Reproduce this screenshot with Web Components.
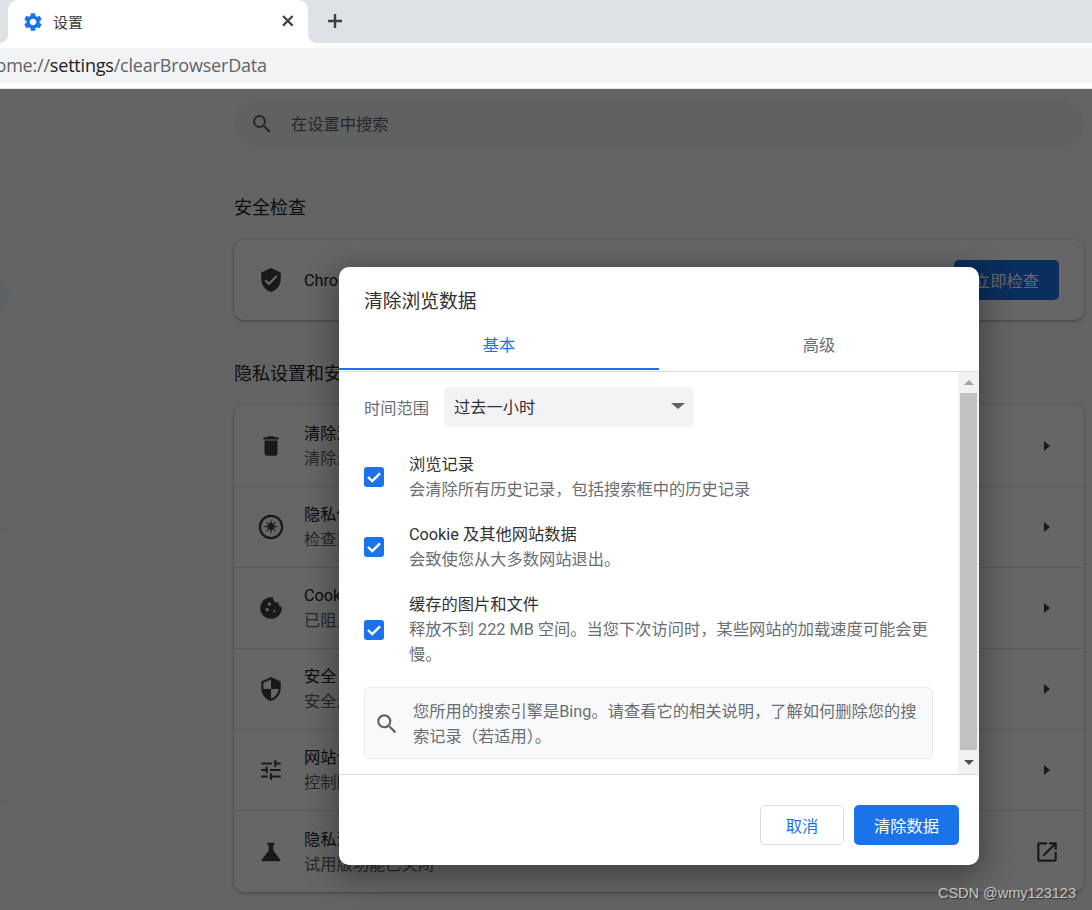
<!DOCTYPE html>
<html lang="zh">
<head>
<meta charset="utf-8">
<title>设置</title>
<style>
  html, body { margin: 0; height: 100%; overflow: hidden; background: #fff; }
  body { font-family: Roboto, "Noto Sans CJK SC", sans-serif; font-size: 16.25px; color: #202124; }
</style>
</head>
<body>
<browser-window>
  <settings-page></settings-page>
  <clear-dialog slot="overlay"></clear-dialog>
</browser-window>

<script>
const ICONS = {
  gear: "M19.14 12.94c.04-.3.06-.61.06-.94 0-.32-.02-.64-.07-.94l2.03-1.58a.49.49 0 0 0 .12-.61l-1.92-3.32a.488.488 0 0 0-.59-.22l-2.39.96c-.5-.38-1.03-.7-1.62-.94l-.36-2.54a.484.484 0 0 0-.48-.41h-3.84c-.24 0-.43.17-.47.41l-.36 2.54c-.59.24-1.13.57-1.62.94l-2.39-.96c-.22-.08-.47 0-.59.22L2.74 8.87c-.12.21-.08.47.12.61l2.03 1.58c-.05.3-.09.63-.09.94s.02.64.07.94l-2.03 1.58a.49.49 0 0 0-.12.61l1.92 3.32c.12.22.37.29.59.22l2.39-.96c.5.38 1.03.7 1.62.94l.36 2.54c.05.24.24.41.48.41h3.84c.24 0 .44-.17.47-.41l.36-2.54c.59-.24 1.13-.56 1.62-.94l2.39.96c.22.08.47 0 .59-.22l1.92-3.32c.12-.22.07-.47-.12-.61l-2.01-1.58zM12 15.6c-1.98 0-3.6-1.62-3.6-3.6s1.62-3.6 3.6-3.6 3.6 1.62 3.6 3.6-1.62 3.6-3.6 3.6z",
  search: "M15.5 14h-.79l-.28-.27A6.471 6.471 0 0 0 16 9.5 6.5 6.5 0 1 0 9.5 16c1.61 0 3.09-.59 4.23-1.57l.27.28v.79l5 4.99L20.49 19l-4.99-5zm-6 0C7.01 14 5 11.99 5 9.5S7.01 5 9.5 5 14 7.01 14 9.5 11.99 14 9.5 14z",
  verified: "M12 1L3 5v6c0 5.55 3.84 10.74 9 12 5.16-1.26 9-6.45 9-12V5l-9-4zm-2 16l-4-4 1.41-1.41L10 14.17l6.59-6.59L18 9l-8 8z",
  trash: "M6 19c0 1.1.9 2 2 2h8c1.1 0 2-.9 2-2V7H6v12zM19 4h-3.5l-1-1h-5l-1 1H5v2h14V4z",
  compass: "M12 1.5a10.5 10.5 0 1 0 0 21 10.5 10.5 0 0 0 0-21zm0 1.9a8.6 8.6 0 1 1 0 17.2 8.6 8.6 0 0 1 0-17.2zM12 5.2l.9 4.2 3.6-2.3-2.3 3.6 4.6.9-4.6 1 2.3 3.5-3.6-2.3-.9 4.6-.9-4.6-3.6 2.3 2.3-3.5-4.6-1 4.6-.9-2.3-3.6 3.6 2.3z",
  cookie: "M21.95 10.99c-1.79-.03-3.7-1.95-2.68-4.22-2.98 1-5.77-1.59-5.19-4.56C6.95.71 2 6.58 2 12c0 5.52 4.48 10 10 10 5.89 0 10.54-5.08 9.95-11.01zM8.5 15c-.83 0-1.5-.67-1.5-1.5S7.67 12 8.5 12s1.5.67 1.5 1.5S9.33 15 8.5 15zm2-5C9.67 10 9 9.33 9 8.5S9.67 7 10.5 7s1.5.67 1.5 1.5-.67 1.5-1.5 1.5zm4.5 6c-.55 0-1-.45-1-1s.45-1 1-1 1 .45 1 1-.45 1-1 1z",
  shield: "M12 1L3 5v6c0 5.55 3.84 10.74 9 12 5.16-1.26 9-6.45 9-12V5l-9-4zm0 10.99h7c-.53 4.12-3.28 7.79-7 8.94V12H5V6.3l7-3.11v8.8z",
  tune: "M3 17v2h6v-2H3zM3 5v2h10V5H3zm10 16v-2h8v-2h-8v-2h-2v6h2zM7 9v2H3v2h4v2h2V9H7zm14 4v-2H11v2h10zm-6-4h2V7h4V5h-4V3h-2v6z",
  flask: "M19.8 18.4L14 10.67V6.5l1.35-1.69c.26-.33.03-.81-.39-.81H9.04c-.42 0-.65.48-.39.81L10 6.5v4.17L4.2 18.4c-.49.66-.02 1.6.8 1.6h14c.82 0 1.29-.94.8-1.6z",
  external: "M19 19H5V5h7V3H5a2 2 0 0 0-2 2v14a2 2 0 0 0 2 2h14c1.1 0 2-.9 2-2v-7h-2v7zM14 3v2h3.59l-9.83 9.83 1.41 1.41L19 6.41V10h2V3h-7z"
};

customElements.define(
  "app-icon",
  class extends HTMLElement {
    connectedCallback() {
      const size = this.getAttribute("size") || 24;
      const d = ICONS[this.getAttribute("name")];
      this.attachShadow({ mode: "open" });
      this.shadowRoot.innerHTML = `
        <style>
          :host { display: inline-flex; flex: none; color: inherit; }
          svg { display: block; fill: currentColor; }
        </style>
        <svg width="${size}" height="${size}" viewBox="0 0 24 24"><path d="${d}"/></svg>
      `;
    }
  }
);

customElements.define(
  "browser-window",
  class extends HTMLElement {
    constructor() {
      super();
      this.attachShadow({ mode: "open" });
      this.shadowRoot.innerHTML = `
        <style>
          :host { display: flex; flex-direction: column; height: 910px; overflow: hidden; }
          .strip { display: flex; align-items: stretch; height: 43px; background: #dee1e6; padding-left: 8px; }
          .tab {
            position: relative; width: 300px; box-sizing: border-box; background: #fff;
            border-radius: 10px 10px 0 0; display: flex; align-items: center; padding: 0 10px 0 14px;
          }
          .tab::before, .tab::after {
            content: ""; position: absolute; bottom: 0; width: 8px; height: 8px;
            background: radial-gradient(circle at var(--c) 0, #dee1e6 7.5px, #fff 8px);
          }
          .tab::before { left: -8px; --c: 0; }
          .tab::after { right: -8px; --c: 100%; }
          .tab-title { flex: 1; margin-left: 9px; font-size: 15px; color: #3c4043; }
          .close { width: 20px; height: 20px; margin-top: -1px; }
          .plus { width: 20px; height: 20px; margin: 11px 0 0 17px; }
          .gap { height: 5px; background: #fff; }
          .omni {
            height: 35px; background: #f1f3f4; display: flex; align-items: center; overflow: hidden;
            font: 18px/35px "Open Sans", "Noto Sans", sans-serif; color: #5f6368; white-space: nowrap;
            letter-spacing: -.2px;
          }
          .omni span { margin-left: -4.5px; }
          .omni b { font-weight: 400; color: #202124; }
          .rule { background: #fff; border-bottom: 1px solid #e4e4e4; box-sizing: border-box; height: 6px; }
          .stage { position: relative; flex: 1; overflow: hidden; }
          .scrim { position: absolute; inset: 0; background: rgba(0, 0, 0, .6); }
          .mark {
            position: absolute; right: 16px; bottom: 9px; font: 14.5px "Liberation Sans", sans-serif;
            color: #c8c8c8; text-shadow: 1px 1px 1px #333;
          }
        </style>
        <div class="strip">
          <div class="tab">
            <app-icon name="gear" size="22" style="color:#1a73e8"></app-icon>
            <span class="tab-title">设置</span>
            <svg class="close" viewBox="0 0 20 20"><path d="M5 5l9.6 9.6M14.6 5L5 14.6" stroke="#3c4043" stroke-width="2.2" fill="none"/></svg>
          </div>
          <svg class="plus" viewBox="0 0 20 20"><path d="M10 3v14M3 10h14" stroke="#3c4043" stroke-width="2.4" fill="none"/></svg>
        </div>
        <div class="gap"></div>
        <div class="omni"><span>ome://<b>settings</b>/clearBrowserData</span></div>
        <div class="rule"></div>
        <div class="stage">
          <slot></slot>
          <div class="scrim"></div>
          <slot name="overlay"></slot>
          <div class="mark">CSDN @wmy123123</div>
        </div>
      `;
    }
  }
);

customElements.define(
  "settings-row",
  class extends HTMLElement {
    connectedCallback() {
      const icon = this.getAttribute("icon");
      const size = this.getAttribute("icon-size") || 26;
      const end = this.getAttribute("end");
      const trail = end === "external"
        ? `<app-icon name="external" size="26" class="ext"></app-icon>`
        : `<i class="chev"></i>`;
      this.attachShadow({ mode: "open" });
      this.shadowRoot.innerHTML = `
        <style>
          :host { display: flex; align-items: center; height: 81px; box-sizing: border-box; padding: 0 25px 0 24px; border-top: 1px solid #dadce0; }
          :host(:first-child) { border-top: 0; }
          :host(:last-child) { height: 82px; }
          .ic { width: 26px; margin-right: 20px; color: #3c4043; display: flex; justify-content: center; }
          .txt { flex: 1; min-width: 0; white-space: nowrap; line-height: 25px; }
          .t { color: #202124; }
          .s { color: #5f6368; }
          .chev { width: 0; height: 0; border-left: 6px solid #3c4043; border-top: 5.5px solid transparent; border-bottom: 5.5px solid transparent; margin-right: 9px; }
          .ext { color: #3c4043; margin-right: -1px; }
        </style>
        <div class="ic"><app-icon name="${icon}" size="${size}"></app-icon></div>
        <div class="txt">
          <div class="t">${this.getAttribute("title")}</div>
          <div class="s">${this.getAttribute("sub")}</div>
        </div>
        ${trail}
      `;
    }
  }
);

customElements.define(
  "settings-page",
  class extends HTMLElement {
    constructor() {
      super();
      this.attachShadow({ mode: "open" });
      this.shadowRoot.innerHTML = `
        <style>
          :host { display: grid; grid-template-columns: 234px 850px; height: 821px; background: #fafafb; }
          nav { padding-top: 185px; }
          .pill { width: 23px; height: 44px; margin-left: -14px; border-radius: 0 22px 22px 0; background: #e8f0fe; }
          .line { width: 12px; height: 1px; background: #e8eaed; }
          main { padding-top: 10px; }
          .search {
            height: 50px; border-radius: 25px; background: #f1f3f4; display: flex; align-items: center;
            padding-left: 15px; color: #5f6368;
          }
          .search app-icon { margin-left: 1px; }
          .search span { margin-left: 17px; margin-top: -2px; }
          h2 { margin: 0; height: 24px; font-size: 18px; font-weight: 400; line-height: 24px; color: #202124; }
          .h1 { margin-top: 47px; }
          .h2 { margin-top: 42px; }
          .card {
            background: #fff; border-radius: 10px; margin-top: 20px;
            box-shadow: 0 1px 2px rgba(60, 64, 67, .3), 0 1px 4px 1px rgba(60, 64, 67, .15);
          }
          .check { height: 80px; display: flex; align-items: center; padding: 0 25px 0 24px; color: #202124; white-space: nowrap; }
          .check .ic { width: 46px; color: #3c4043; display: flex; }
          .check .txt { flex: 1; min-width: 0; }
          .btn {
            flex: none; width: 105px; height: 40px; border-radius: 5px; background: #1a73e8; color: #fff;
            display: flex; align-items: center; justify-content: center;
          }
          .rows { margin-top: 19px; }
        </style>
        <nav>
          <div class="pill"></div>
          <div class="line" style="margin-top:211px"></div>
          <div class="line" style="margin-top:271px"></div>
        </nav>
        <main>
          <div class="search"><app-icon name="search" size="24"></app-icon><span>在设置中搜索</span></div>
          <h2 class="h1">安全检查</h2>
          <div class="card check">
            <div class="ic"><app-icon name="verified" size="26"></app-icon></div>
            <div class="txt">Chrome</div>
            <div class="btn">立即检查</div>
          </div>
          <h2 class="h2">隐私设置和安全性</h2>
          <div class="card rows">
            <settings-row icon="trash" title="清除浏" sub="清除浏"></settings-row>
            <settings-row icon="compass" icon-size="28" title="隐私保" sub="检查重"></settings-row>
            <settings-row icon="cookie" title="Cookie" sub="已阻止"></settings-row>
            <settings-row icon="shield" title="安全" sub="安全浏"></settings-row>
            <settings-row icon="tune" title="网站设" sub="控制网"></settings-row>
            <settings-row icon="flask" icon-size="28" end="external" title="隐私沙盒" sub="试用版功能已关闭"></settings-row>
          </div>
        </main>
      `;
    }
  }
);

customElements.define(
  "check-item",
  class extends HTMLElement {
    constructor() {
      super();
      this.attachShadow({ mode: "open" });
      this.shadowRoot.innerHTML = `
        <style>
          :host { display: flex; align-items: center; gap: 25px; line-height: 25px; }
          .box { flex: none; width: 20px; height: 20px; border-radius: 3px; background: #1a73e8; display: flex; }
          .t { color: #303134; }
          .s { color: #6a6e73; }
        </style>
        <div class="box">
          <svg width="20" height="20" viewBox="0 0 20 20"><path d="M4 10l4.2 4 7.8-7.7" stroke="#fff" stroke-width="2.4" fill="none"/></svg>
        </div>
        <div>
          <div class="t"><slot name="title"></slot></div>
          <div class="s"><slot name="sub"></slot></div>
        </div>
      `;
    }
  }
);

customElements.define(
  "clear-dialog",
  class extends HTMLElement {
    constructor() {
      super();
      this.attachShadow({ mode: "open" });
      this.shadowRoot.innerHTML = `
        <style>
          :host {
            position: absolute; left: 339px; top: 178px; width: 640px; height: 598px;
            display: flex; flex-direction: column; overflow: hidden; background: #fff; border-radius: 10px;
            box-shadow: 0 8px 30px 6px rgba(0, 0, 0, .32);
          }
          .title { height: 55px; flex: none; box-sizing: border-box; padding: 21px 25px 0; font-size: 18.75px; line-height: 28px; color: #303134; }
          .tabs { flex: none; display: flex; height: 50px; border-bottom: 1px solid #dadce0; box-sizing: border-box; }
          .tabs div { flex: 1; display: flex; align-items: center; justify-content: center; color: #6a6e73; height: 48px; padding-bottom: 2px; box-sizing: border-box; border-bottom: 2px solid transparent; }
          .tabs .on { color: #1a73e8; border-bottom-color: #1a73e8; }
          .mid { flex: 1; min-height: 0; display: flex; border-bottom: 1px solid #dadce0; }
          .body { flex: 1; min-width: 0; padding: 15px 25px 0; overflow: hidden; }
          .range { display: flex; align-items: center; gap: 15px; color: #6a6e73; }
          .range > span { padding-bottom: 1px; }
          .select {
            width: 250px; height: 40px; box-sizing: border-box; padding: 0 9px 3px 10px; border-radius: 5px;
            background: #f1f3f4; color: #303134; display: flex; align-items: center; justify-content: space-between;
          }
          .select i { width: 0; height: 0; border-top: 6.5px solid #5f6368; border-left: 7px solid transparent; border-right: 7px solid transparent; }
          .items { margin-top: 25px; display: flex; flex-direction: column; gap: 20px; }
          .info {
            margin-top: 20px; height: 72px; box-sizing: border-box; width: 569px; padding: 1px 15px 0 9px;
            border: 1px solid #e8eaed; border-radius: 5px; background: #f8f9fa; display: flex; align-items: center; gap: 13px;
            color: #6a6e73; line-height: 25px;
          }
          .info app-icon { color: #5f6368; }
          .bar { flex: none; width: 21px; background: #f1f1f1; display: flex; flex-direction: column; align-items: center; }
          .up, .down { flex: none; height: 21px; display: flex; align-items: center; justify-content: center; }
          .down { height: 24px; }
          .up i { border-bottom: 5px solid #a3a3a3; border-left: 5px solid transparent; border-right: 5px solid transparent; }
          .down i { border-top: 5px solid #505050; border-left: 5px solid transparent; border-right: 5px solid transparent; }
          .thumb { flex: 1; width: 17px; background: #c1c1c1; }
          .foot { flex: none; height: 90px; box-sizing: border-box; padding: 30px 20px 20px; display: flex; justify-content: flex-end; gap: 10px; }
          .b { height: 40px; border-radius: 5px; display: flex; align-items: center; justify-content: center; box-sizing: border-box; }
          .cancel { width: 84px; border: 1px solid #dadce0; color: #1a73e8; background: #fff; }
          .ok { width: 105px; background: #1a73e8; color: #fff; }
        </style>
        <div class="title">清除浏览数据</div>
        <div class="tabs"><div class="on">基本</div><div>高级</div></div>
        <div class="mid">
          <div class="body">
            <div class="range">
              <span>时间范围</span>
              <div class="select"><span>过去一小时</span><i></i></div>
            </div>
            <div class="items">
              <check-item>
                <span slot="title">浏览记录</span>
                <span slot="sub">会清除所有历史记录，包括搜索框中的历史记录</span>
              </check-item>
              <check-item>
                <span slot="title">Cookie 及其他网站数据</span>
                <span slot="sub">会致使您从大多数网站退出。</span>
              </check-item>
              <check-item>
                <span slot="title">缓存的图片和文件</span>
                <span slot="sub">释放不到 222 MB 空间。当您下次访问时，某些网站的加载速度可能会更慢。</span>
              </check-item>
            </div>
            <div class="info">
              <app-icon name="search" size="26"></app-icon>
              <div>您所用的搜索引擎是Bing。请查看它的相关说明，了解如何删除您的搜索记录（若适用）。</div>
            </div>
          </div>
          <div class="bar">
            <div class="up"><i></i></div>
            <div class="thumb"></div>
            <div class="down"><i></i></div>
          </div>
        </div>
        <div class="foot">
          <div class="b cancel">取消</div>
          <div class="b ok">清除数据</div>
        </div>
      `;
    }
  }
);
</script>
</body>
</html>
